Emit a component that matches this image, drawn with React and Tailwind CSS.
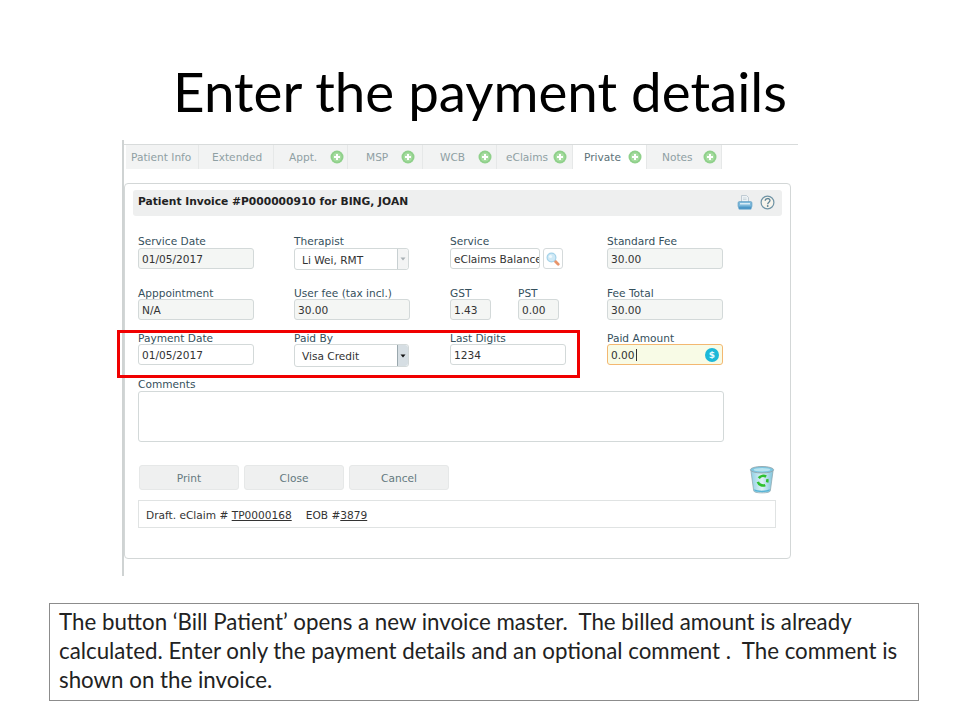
import React from 'react';

const TABS = [
  { name: 'Patient Info', width: 'w-[73px]', pad: 'pl-[5px]', gap: 'gap-0' },
  { name: 'Extended', width: 'w-[75px]', pad: 'pl-[13px]', gap: 'gap-0' },
  { name: 'Appt.', width: 'w-[74px]', pad: 'pl-[15px]', gap: 'gap-[13px]', plus: true },
  { name: 'MSP', width: 'w-[75px]', pad: 'pl-[18px]', gap: 'gap-[13px]', plus: true },
  { name: 'WCB', width: 'w-[74px]', pad: 'pl-[17px]', gap: 'gap-[13px]', plus: true },
  { name: 'eClaims', width: 'w-[76px]', pad: 'pl-[9px]', gap: 'gap-[5px]', plus: true },
  { name: 'Private', width: 'w-[74px]', pad: 'pl-[11px]', gap: 'gap-[7px]', plus: true, active: true },
  { name: 'Notes', width: 'w-[75px]', pad: 'pl-[15px]', gap: 'gap-[10px]', plus: true },
];

const PlusIcon = () => (
  <svg width="14" height="14" viewBox="0 0 14 14" className="shrink-0">
    <circle cx="7" cy="7" r="6.5" fill="#8fd08a" />
    <circle cx="7" cy="7" r="4.5" fill="#a6dca0" />
    <path d="M7 4v6M4 7h6" stroke="#fff" strokeWidth="2" />
  </svg>
);

const PrinterIcon = () => (
  <svg width="16" height="15" viewBox="0 0 16 15">
    <path d="M4.5 0.500h5l2 2v5h-7z" fill="#eef3f6" stroke="#b4c2ca" strokeWidth="0.8" />
    <path d="M6 3h3.500M6 4.500h3.500" stroke="#c2ced4" strokeWidth="0.7" />
    <rect x="1" y="6.500" width="14" height="6" rx="1.500" fill="#7db8da" stroke="#5a9abf" strokeWidth="0.6" />
    <rect x="3" y="8" width="10" height="1.500" fill="#d8ecf6" />
    <rect x="1.500" y="11.500" width="13" height="3" rx="1" fill="#4d97c6" />
  </svg>
);

const HelpIcon = () => (
  <svg width="15" height="15" viewBox="0 0 15 15">
    <circle cx="7.500" cy="7.500" r="6.400" fill="#f7f4ec" stroke="#6f93a5" strokeWidth="1.200" />
    <path d="M5.200 5.800c0-3 4.800-3 4.800-.2 0 1.700-2.300 1.700-2.300 3.600" fill="none" stroke="#5d8396" strokeWidth="1.300" />
    <circle cx="7.700" cy="11" r="0.900" fill="#5d8396" />
  </svg>
);

const SearchIcon = () => (
  <svg width="14" height="14" viewBox="0 0 14 14">
    <path d="M9 9l3.200 3.200" stroke="#e8946a" strokeWidth="2.800" strokeLinecap="round" />
    <circle cx="5.500" cy="5.500" r="4.400" fill="#cfe9f6" stroke="#a5d3ea" strokeWidth="1.200" />
    <circle cx="4.500" cy="4.500" r="1.600" fill="#f0f9fd" />
  </svg>
);

const BinIcon = () => (
  <svg width="26" height="29" viewBox="0 0 28 30">
    <defs>
      <linearGradient id="binGlass" x1="0" y1="0" x2="1" y2="0">
        <stop offset="0" stopColor="#8fcfe4" />
        <stop offset="0.5" stopColor="#dff2f6" />
        <stop offset="1" stopColor="#7fc4dc" />
      </linearGradient>
    </defs>
    <path d="M2 5l3 22c.2 1.500 3.500 2.400 9 2.400s8.800-.9 9-2.400l3-22z" fill="url(#binGlass)" stroke="#8ea6ae" strokeWidth="0.800" />
    <ellipse cx="14" cy="4.500" rx="12.500" ry="3.500" fill="#7cc7e2" stroke="#94a8ae" strokeWidth="1" />
    <ellipse cx="14" cy="4.500" rx="9" ry="1.800" fill="#b7e3ef" />
    <path d="M5.500 25.500c4 2 13 2 17 0l-.5 2c-3 1.600-13 1.600-16 0z" fill="#58b4d6" />
    <path d="M18.500 12a6 6 0 0 0-8 1.500M9.500 17.500a6 6 0 0 0 8 3.500M19.500 14.500a6 6 0 0 1 0 3.500" fill="none" stroke="#2fc02f" strokeWidth="2.800" />
  </svg>
);

const DollarIcon = () => (
  <span className="absolute right-[3px] top-[3px] flex h-[14px] w-[14px] items-center justify-center rounded-full bg-[#1cb8d8] text-[9px] font-bold leading-none text-[#e8fbff]">
    $
  </span>
);

const Arrow = ({ color }) => (
  <svg width="6" height="4" viewBox="0 0 6 4">
    <path d="M0.500 0.500h5L3 3.500z" fill={color} />
  </svg>
);

const Field = ({ label, className = 'w-[156px]', low, children }) => (
  <div className={className}>
    <div className="h-[12px] text-[10.6px] leading-[12px] text-[#35505c]">{label}</div>
    <div className={low ? 'mt-[1px]' : ''}>{children}</div>
  </div>
);

const TextBox = ({ value, width = 'w-[116px]', filled = true }) => (
  <div
    className={`${width} h-[21px] overflow-hidden whitespace-nowrap rounded-[3px] border border-[#d3d9d9] pl-[3px] text-[10.6px] leading-[20px] text-[#333] ${
      filled ? 'bg-[#f4f6f4]' : 'bg-white'
    }`}
  >
    {value}
  </div>
);

const SelectBox = ({ value, strong }) => (
  <div className={`flex w-[115px] items-center rounded-[3px] border border-[#d3d9d9] bg-white pl-[7px] text-[10.6px] text-[#333] ${strong ? 'h-[23px]' : 'h-[22px]'}`}>
    <span className="flex-1 pt-[3px]">{value}</span>
    <span
      className={`flex h-full w-[11px] items-center justify-center rounded-r-[3px] border-l ${
        strong ? 'border-[#9aa8ae] bg-[#d6dee3]' : 'border-[#c8d0d2] bg-[#f3f4f4]'
      }`}
    >
      <Arrow color={strong ? '#111' : '#a8b0b4'} />
    </span>
  </div>
);

const ActionButton = ({ label }) => (
  <button className="h-[25px] w-[100px] rounded-[3px] border border-[#e6e8e8] bg-[#eff0f0] pt-[2px] text-[10.6px] text-[#64797f]">
    {label}
  </button>
);

const Tabs = () => (
  <div className="ml-[2px] flex h-[24px]">
    {TABS.map((tab) => (
      <div
        key={tab.name}
        className={`flex ${tab.width} ${tab.pad} ${tab.gap} items-center border-r border-[#e6e8e8] text-[10.6px] ${
          tab.active ? 'bg-white text-[#5c7278]' : 'bg-[#f2f3f3] text-[#8fa0a3]'
        }`}
      >
        <span className="pt-[1px]">{tab.name}</span>
        {tab.plus && <PlusIcon />}
      </div>
    ))}
  </div>
);

const InvoicePanel = () => (
  <div className="mt-[14px] h-[376px] w-[667px] rounded-[4px] border border-[#d3d7d7] bg-white pt-[6px]">
    <div className="mx-[8px] flex h-[26px] items-center justify-between rounded-[3px] bg-[#eeefef] pl-[5px] pr-[7px]">
      <span className="pb-[2px] text-[10.7px] font-bold text-[#222]">Patient Invoice #P000000910 for BING, JOAN</span>
      <span className="flex items-center gap-[7px] pb-[2px]">
        <PrinterIcon />
        <HelpIcon />
      </span>
    </div>

    <div className="pl-[13px]">
      <div className="mt-[19px] flex">
        <Field label="Service Date" low><TextBox value="01/05/2017" /></Field>
        <Field label="Therapist" low><SelectBox value="Li Wei, RMT" /></Field>
        <Field label="Service" low>
          <div className="flex items-center gap-[3px]">
            <TextBox value="eClaims Balance" width="w-[90px]" filled={false} />
            <span className="flex h-[21px] w-[20px] items-center justify-center rounded-[3px] border border-[#d5dadb] bg-white">
              <SearchIcon />
            </span>
          </div>
        </Field>
        <Field label="Standard Fee" className="ml-[1px] w-[116px]" low><TextBox value="30.00" /></Field>
      </div>

      <div className="mt-[17px] flex">
        <Field label="Apppointment"><TextBox value="N/A" /></Field>
        <Field label="User fee (tax incl.)"><TextBox value="30.00" /></Field>
        <div className="flex w-[156px]">
          <Field label="GST" className="w-[68px]"><TextBox value="1.43" width="w-[41px]" /></Field>
          <Field label="PST" className="w-[68px]"><TextBox value="0.00" width="w-[41px]" /></Field>
        </div>
        <Field label="Fee Total" className="ml-[1px] w-[116px]"><TextBox value="30.00" /></Field>
      </div>

      <div className="mt-[12px] flex">
        <Field label="Payment Date"><TextBox value="01/05/2017" filled={false} /></Field>
        <Field label="Paid By"><SelectBox value="Visa Credit" strong /></Field>
        <Field label="Last Digits"><TextBox value="1234" filled={false} /></Field>
        <Field label="Paid Amount" className="ml-[1px] w-[116px]">
          <div className="relative h-[21px] w-[116px] rounded-[3px] border border-[#f3b871] bg-[#f8fbe6] pl-[3px] text-[10.6px] leading-[20px] text-[#333]">
            <span className="border-r border-[#333] pr-[1px]">0.00</span>
            <DollarIcon />
          </div>
        </Field>
      </div>

      <div className="mt-[11px]">
        <Field label="Comments" className="w-[586px]" low>
          <div className="h-[51px] w-[586px] rounded-[3px] border border-[#d3d9d9] bg-white" />
        </Field>
      </div>

      <div className="mt-[23px] flex h-[25px] items-start gap-[5px] pl-[1px]">
        <ActionButton label="Print" />
        <ActionButton label="Close" />
        <ActionButton label="Cancel" />
        <span className="ml-auto mr-[15px]"><BinIcon /></span>
      </div>

      <div className="mt-[10px] flex h-[28px] w-[638px] items-center border border-[#e0e3e3] pl-[7px] pt-[3px] text-[10.6px] text-[#333]">
        <span>Draft. eClaim # <span className="underline">TP0000168</span></span>
        <span className="ml-[14px]">EOB #<span className="underline">3879</span></span>
      </div>
    </div>
  </div>
);

const App = () => {
  return (
    <div className="relative h-[720px] w-[960px] overflow-hidden bg-white font-['DejaVu_Sans',sans-serif]">
      <h1 className="pt-[56px] text-center font-['Lato',sans-serif] text-[54.7px] font-normal leading-[70px] text-black">
        Enter the payment details
      </h1>

      <div className="ml-[122px] mt-[14px] h-[436px] w-[676px] border-l-2 border-[#cfd3d3] pt-[4px]">
        <div className="border-t border-[#d8dbdb]">
          <Tabs />
          <InvoicePanel />
        </div>
      </div>

      <div className="ml-[49px] mt-[27px] h-[98px] w-[870px] whitespace-pre border border-[#8c8c8c] px-[9px] pt-[3px] font-['Lato',sans-serif] text-[22.3px] leading-[29px] text-[#222]">
        The button ‘Bill Patient’ opens a new invoice master.  The billed amount is already{'\n'}
        calculated. Enter only the payment details and an optional comment .  The comment is{'\n'}
        shown on the invoice.
      </div>

      {/* red highlight over the payment row */}
      <div className="absolute left-[117px] top-[330px] h-[48px] w-[463px] border-[3px] border-[#f00000]" />
    </div>
  );
};

export default App;
